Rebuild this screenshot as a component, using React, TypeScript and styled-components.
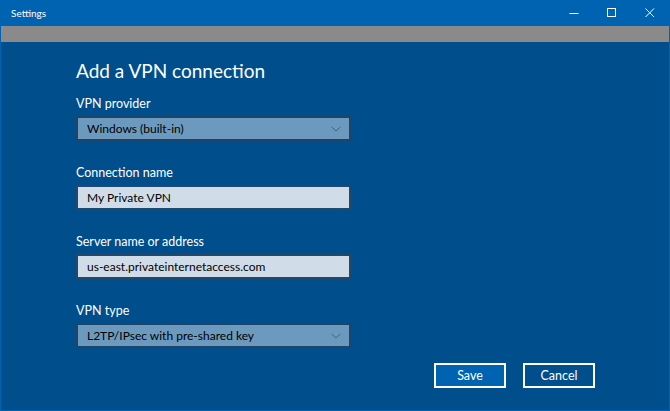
import React from 'react';
import styled, { createGlobalStyle } from 'styled-components';

const GlobalStyle = createGlobalStyle`
  html, body {
    margin: 0;
    padding: 0;
    background: #0063b1;
  }
  body {
    font-family: Lato, "Noto Sans", Arial, sans-serif;
  }
`;

const Window = styled.div`
  width: 670px;
  height: 411px;
  box-sizing: border-box;
  display: flex;
  flex-direction: column;
  background: #0063b1;
  border: 1px solid #0063b1;
  border-top: 0;
`;

const TitleBar = styled.div`
  height: 26px;
  display: flex;
  align-items: center;
  justify-content: space-between;
  color: #fff;
`;

const TitleText = styled.span`
  font-size: 10px;
  padding-left: 10px;
`;

const Controls = styled.div`
  display: flex;
  height: 100%;
`;

const ControlButton = styled.div`
  width: 38px;
  height: 100%;
  display: flex;
  align-items: center;
  justify-content: center;
`;

const GrayBand = styled.div`
  height: 16px;
  background: #8a8a8a;
`;

const Body = styled.div`
  flex: 1;
  background: #004e8c;
  padding: 16px 74px 0 75px;
  display: flex;
  flex-direction: column;
`;

const Heading = styled.h1`
  margin: 0 0 12px;
  font-weight: 400;
  font-size: 19px;
  line-height: 26px;
  color: #fff;
`;

const Field = styled.div`
  width: 275px;
  display: flex;
  flex-direction: column;
  margin-bottom: 24px;
`;

const Label = styled.label`
  font-size: 12.5px;
  line-height: 16px;
  color: #fff;
  margin-bottom: 4px;
`;

const Box = styled.div<{ $select?: boolean }>`
  height: 25px;
  box-sizing: border-box;
  border: 2px solid ${(p) => (p.$select ? '#1f4468' : '#23486c')};
  background: ${(p) => (p.$select ? '#6c9abf' : '#d0dde9')};
  display: flex;
  align-items: center;
  justify-content: space-between;
  padding: 0 8px 0 9px;
  font-size: 12px;
  color: #000;
`;

const Chevron = () => (
  <svg width="10" height="6" viewBox="0 0 10 6">
    <path d="M0.5 0.8 L5 5 L9.5 0.8" fill="none" stroke="#46637f" strokeWidth="1" />
  </svg>
);

const Buttons = styled.div`
  display: flex;
  justify-content: flex-end;
  gap: 17px;
  margin-top: -9px;
`;

const Button = styled.div<{ $primary?: boolean }>`
  width: 72px;
  height: 25px;
  box-sizing: border-box;
  border: 2px solid #fff;
  background: ${(p) => (p.$primary ? '#0063b1' : 'transparent')};
  color: #fff;
  font-size: 12.5px;
  display: flex;
  align-items: center;
  justify-content: center;
`;

export default function App() {
  return (
    <>
      <GlobalStyle />
      <Window>
        <TitleBar>
          <TitleText>Settings</TitleText>
          <Controls>
            <ControlButton>
              <svg width="10" height="10" viewBox="0 0 10 10">
                <path d="M0.5 5.5 H9.5" stroke="#fff" strokeWidth="1" />
              </svg>
            </ControlButton>
            <ControlButton>
              <svg width="10" height="10" viewBox="0 0 10 10">
                <rect x="0.5" y="0.5" width="8" height="8" fill="none" stroke="#fff" strokeWidth="1" />
              </svg>
            </ControlButton>
            <ControlButton>
              <svg width="10" height="10" viewBox="0 0 10 10">
                <path d="M0.5 0.5 L9 9 M9 0.5 L0.5 9" stroke="#fff" strokeWidth="1" />
              </svg>
            </ControlButton>
          </Controls>
        </TitleBar>
        <GrayBand />
        <Body>
          <Heading>Add a VPN connection</Heading>
          <Field>
            <Label>VPN provider</Label>
            <Box $select>
              <span>Windows (built-in)</span>
              <Chevron />
            </Box>
          </Field>
          <Field>
            <Label>Connection name</Label>
            <Box>My Private VPN</Box>
          </Field>
          <Field>
            <Label>Server name or address</Label>
            <Box>us-east.privateinternetaccess.com</Box>
          </Field>
          <Field>
            <Label>VPN type</Label>
            <Box $select>
              <span>L2TP/IPsec with pre-shared key</span>
              <Chevron />
            </Box>
          </Field>
          <Buttons>
            <Button $primary>Save</Button>
            <Button>Cancel</Button>
          </Buttons>
        </Body>
      </Window>
    </>
  );
}
